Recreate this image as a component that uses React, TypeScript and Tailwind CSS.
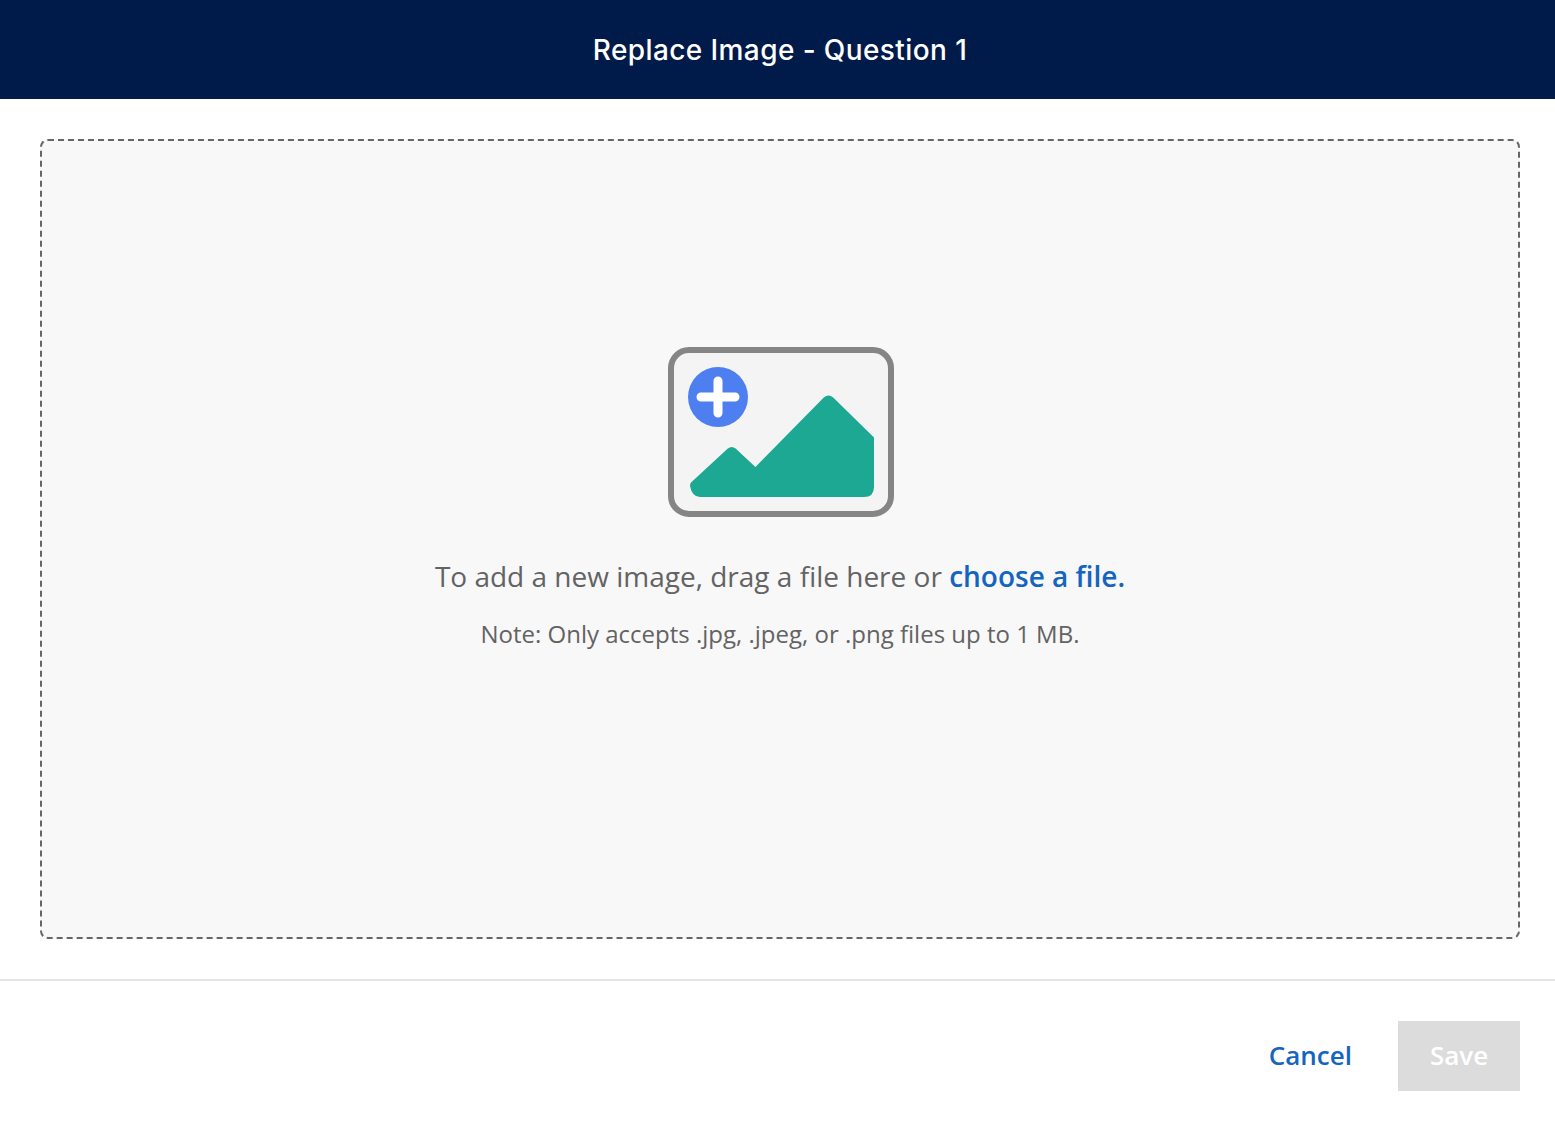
import React from 'react'

function AddImageIcon() {
  return (
    <svg className="ml-[1px]" width="226" height="170" viewBox="0 0 226 170" fill="none">
      <rect x="3" y="3" width="220" height="164" rx="18" fill="#f4f4f4" stroke="#858585" strokeWidth="6" />
      <path
        d="M23 135.5 L59.8 101.4 Q63.7 98.4 67.6 101.4 L87.4 120 L155.8 50.4 Q160.5 46.4 165.2 50.4 L206 90.6 L206 140 Q206 150 196 150 L32 150 Q24 150 22 139 Q22 136.5 23 135.5 Z"
        fill="#1ca892"
      />
      <circle cx="50" cy="50" r="30" fill="#4d7ff0" />
      <path d="M50 34 V66 M33 50 H67" stroke="#fff" strokeWidth="9" strokeLinecap="round" />
    </svg>
  )
}

export default function App() {
  return (
    <div className="flex h-[1130px] flex-col bg-white font-['Open_Sans',sans-serif]">
      {/* Header */}
      <header className="flex h-[99px] items-center justify-center bg-[#001a49] pl-[5px]">
        <h1 className="font-['Inter',sans-serif] text-[28px] font-medium tracking-[0.4px] text-white">Replace Image - Question 1</h1>
      </header>

      {/* Drop zone */}
      <div className="pt-10 pr-[35px] pb-10 pl-10">
        <div className="flex h-[800px] flex-col items-center rounded-lg border-2 border-dashed border-[#666666] bg-[#f8f8f8] pt-[206px]">
          <AddImageIcon />
          <p className="mt-[37px] text-[28px] leading-[44px] text-[#636363]">
            To add a new image, drag a file here or{' '}
            <a className="font-semibold text-[#1464c0]">choose a file.</a>
          </p>
          <p className="mt-[20px] text-[24px] leading-[32px] text-[#636363]">
            Note: Only accepts .jpg, .jpeg, or .png files up to 1 MB.
          </p>
        </div>
      </div>

      {/* Footer */}
      <footer className="flex items-center justify-end gap-[46px] border-t-2 border-[#e4e4e4] px-[35px] pt-10">
        <button className="pb-[2px] text-[26px] font-semibold text-[#1464c0]">Cancel</button>
        <button className="h-[70px] w-[122px] bg-[#dcdcdc] pb-[2px] text-[26px] font-semibold text-white">Save</button>
      </footer>
    </div>
  )
}
